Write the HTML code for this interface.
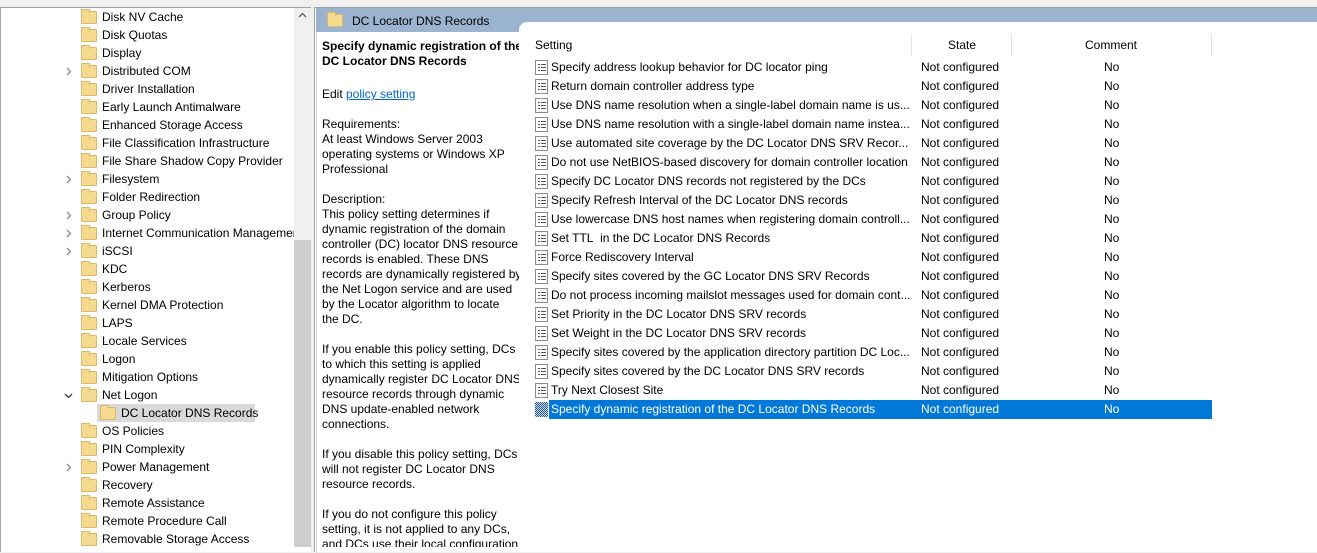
<!DOCTYPE html>
<html><head><meta charset="utf-8"><style>
*{margin:0;padding:0;box-sizing:border-box}
body{width:1317px;height:547px;overflow:hidden;background:#f0f0f0;font-family:"Liberation Sans",sans-serif;font-size:12px;color:#000;position:relative}
.abs{position:absolute;white-space:nowrap}
#tree{position:absolute;left:0;top:7px;width:311px;height:545px;background:#fff;border-top:1px solid #a0a0a0;border-left:1px solid #a0a0a0;overflow:hidden}
.ti{position:absolute;height:18px;line-height:18px;left:101px;white-space:nowrap}
.fold{position:absolute;width:16px;height:13px;background:#f4d98e;border:1px solid #d9b86a;border-radius:1px}
.fold:before{content:"";position:absolute;left:-1px;top:-3px;width:7px;height:3px;background:#f4d98e;border:1px solid #d9b86a;border-bottom:none}
.chev{position:absolute}
#sb{position:absolute;left:294px;top:8px;width:17px;height:539px;background:#f0f0f0}
#thumb{position:absolute;left:294px;top:240px;width:17px;height:307px;background:#cdcdcd}
#right{position:absolute;left:314px;top:7px;width:1003px;height:545px;border-left:1px solid #a0a0a0;border-top:1px solid #a0a0a0;background:#fff}
#right:before{content:"";position:absolute;left:1px;top:0;width:1px;height:545px;background:#dadada}
#hdr{position:absolute;left:316px;top:8px;width:1001px;height:24px;background:#9ab3cf}
#white{position:absolute;left:519px;top:22px;width:798px;height:20px;background:#fff;border-top-left-radius:8px}
#desc{position:absolute;left:322px;top:0;width:197px;height:547px;overflow:hidden}
.d{position:absolute;left:0;line-height:15px;white-space:nowrap}
.row{position:absolute;left:531px;height:19px;line-height:19px;width:681px;white-space:nowrap}
.row .ic{position:absolute;left:4px;top:2px;width:13px;height:15px;border:1px solid #8a8a8a;background:#fff}
.row .ic:before{content:"";position:absolute;left:2px;top:3px;width:2px;height:8px;background:repeating-linear-gradient(#555 0 1px,transparent 1px 3px)}
.row .ic:after{content:"";position:absolute;left:5px;top:3px;width:5px;height:8px;background:repeating-linear-gradient(#555 0 1px,transparent 1px 3px)}
.row .t{position:absolute;left:20px;width:360px;overflow:hidden;white-space:nowrap}
.row .s{position:absolute;left:390px}
.row .c{position:absolute;left:573px}
.sel .t{background:#0078d7;color:#fff;left:18px;padding-left:2px;width:663px}
.sel .s,.sel .c{color:#fff}
.sel .ic{border:none;background:repeating-conic-gradient(#2b5a8a 0 25%,#c8d8e8 0 50%) 0 0/2px 2px}
.sel .ic:before,.sel .ic:after{display:none}
.col{position:absolute;top:34px;width:1px;height:22px;background:#e5e5e5}
</style></head><body>
<div id="tree"></div>
<div id="sb"></div><div id="thumb"></div>
<svg class="abs" style="left:298px;top:12px" width="9" height="6"><path d="M1 5 L4.5 1.5 L8 5" fill="none" stroke="#606060" stroke-width="1.3"/></svg>

<div id="right"></div>
<div id="hdr"></div>
<div id="white"></div>
<div class="fold" style="left:327px;top:14px"></div>
<div class="abs" style="left:352px;top:14px;font-size:12px">DC Locator DNS Records</div>

<div id="desc">
<div class="d" style="top:39px;font-weight:bold">Specify dynamic registration of the<br>DC Locator DNS Records</div>
<div class="d" style="top:87px">Edit <span style="color:#0066cc;text-decoration:underline">policy setting </span></div>
<div class="d" style="top:117px">Requirements:<br>At least Windows Server 2003<br>operating systems or Windows XP<br>Professional<br><br>Description:<br>This policy setting determines if<br>dynamic registration of the domain<br>controller (DC) locator DNS resource<br>records is enabled. These DNS<br>records are dynamically registered by<br>the Net Logon service and are used<br>by the Locator algorithm to locate<br>the DC.<br><br>If you enable this policy setting, DCs<br>to which this setting is applied<br>dynamically register DC Locator DNS<br>resource records through dynamic<br>DNS update-enabled network<br>connections.<br><br>If you disable this policy setting, DCs<br>will not register DC Locator DNS<br>resource records.<br><br>If you do not configure this policy<br>setting, it is not applied to any DCs,<br>and DCs use their local configuration.</div>
</div>
<div style="position:absolute;left:520px;top:32px;width:797px;height:515px;background:#fff"></div>

<div class="abs" style="left:535px;top:38px">Setting</div>
<div class="col" style="left:911px"></div>
<div class="abs" style="left:948px;top:38px">State</div>
<div class="col" style="left:1011px"></div>
<div class="abs" style="left:1085px;top:38px">Comment</div>
<div class="col" style="left:1211px"></div>

<div id="rows"></div>

<script>
var tree=[["Disk NV Cache"],["Disk Quotas"],["Display"],["Distributed COM",">"],["Driver Installation"],["Early Launch Antimalware"],["Enhanced Storage Access"],["File Classification Infrastructure"],["File Share Shadow Copy Provider"],["Filesystem",">"],["Folder Redirection"],["Group Policy",">"],["Internet Communication Management",">"],["iSCSI",">"],["KDC"],["Kerberos"],["Kernel DMA Protection"],["LAPS"],["Locale Services"],["Logon"],["Mitigation Options"],["Net Logon","v"],["DC Locator DNS Records","",1],["OS Policies"],["PIN Complexity"],["Power Management",">"],["Recovery"],["Remote Assistance"],["Remote Procedure Call"],["Removable Storage Access"]];
var h="";
tree.forEach(function(t,i){var y=8+i*18;var ind=t[2]?19:0;
if(t[2])h+='<div style="position:absolute;left:97px;top:'+(y)+'px;width:158px;height:18px;background:#d9d9d9"></div>';
h+='<div class="fold" style="left:'+(81+ind)+'px;top:'+(y+3)+'px"></div>';
h+='<div class="ti" style="top:'+y+'px;left:'+(102+ind)+'px">'+t[0]+'</div>';
if(t[1]==">")h+='<svg class="chev" style="left:66px;top:'+(y+5)+'px" width="6" height="9"><path d="M1 1 L4.5 4.5 L1 8" fill="none" stroke="#8a8a8a" stroke-width="1.3"/></svg>';
if(t[1]=="v")h+='<svg class="chev" style="left:64px;top:'+(y+7)+'px" width="9" height="6"><path d="M1 1 L4.5 4.5 L8 1" fill="none" stroke="#404040" stroke-width="1.3"/></svg>';
});
var hd=document.createElement("div");hd.innerHTML=h;hd.style.cssText="position:absolute;left:0;top:0;width:294px;height:547px;overflow:hidden";document.body.insertBefore(hd,document.getElementById("sb"));
var rows=["Specify address lookup behavior for DC locator ping","Return domain controller address type","Use DNS name resolution when a single-label domain name is used, by appending different registered DNS suffixes","Use DNS name resolution with a single-label domain name instead of NetBIOS","Use automated site coverage by the DC Locator DNS SRV Records","Do not use NetBIOS-based discovery for domain controller location","Specify DC Locator DNS records not registered by the DCs","Specify Refresh Interval of the DC Locator DNS records","Use lowercase DNS host names when registering domain controllers","Set TTL  in the DC Locator DNS Records","Force Rediscovery Interval","Specify sites covered by the GC Locator DNS SRV Records","Do not process incoming mailslot messages used for domain controller location","Set Priority in the DC Locator DNS SRV records","Set Weight in the DC Locator DNS SRV records","Specify sites covered by the application directory partition DC Locator DNS SRV records","Specify sites covered by the DC Locator DNS SRV records","Try Next Closest Site","Specify dynamic registration of the DC Locator DNS Records"];
var r="";
rows.forEach(function(t,i){var y=58+i*19;var sel=i==rows.length-1;
r+='<div class="row'+(sel?' sel':'')+'" style="top:'+y+'px"><div class="ic"></div><div class="t">'+t.replace(/  /g,"&nbsp; ")+'</div><div class="s">Not configured</div><div class="c">No</div></div>';});
document.getElementById("rows").innerHTML=r;
document.querySelectorAll(".row:not(.sel) .t").forEach(function(e){if(e.scrollWidth>e.clientWidth){var s=e.textContent;while(e.scrollWidth>e.clientWidth&&s.length>3){s=s.slice(0,-1);e.textContent=s.trim()+"...";}}});
</script>
</body></html>
